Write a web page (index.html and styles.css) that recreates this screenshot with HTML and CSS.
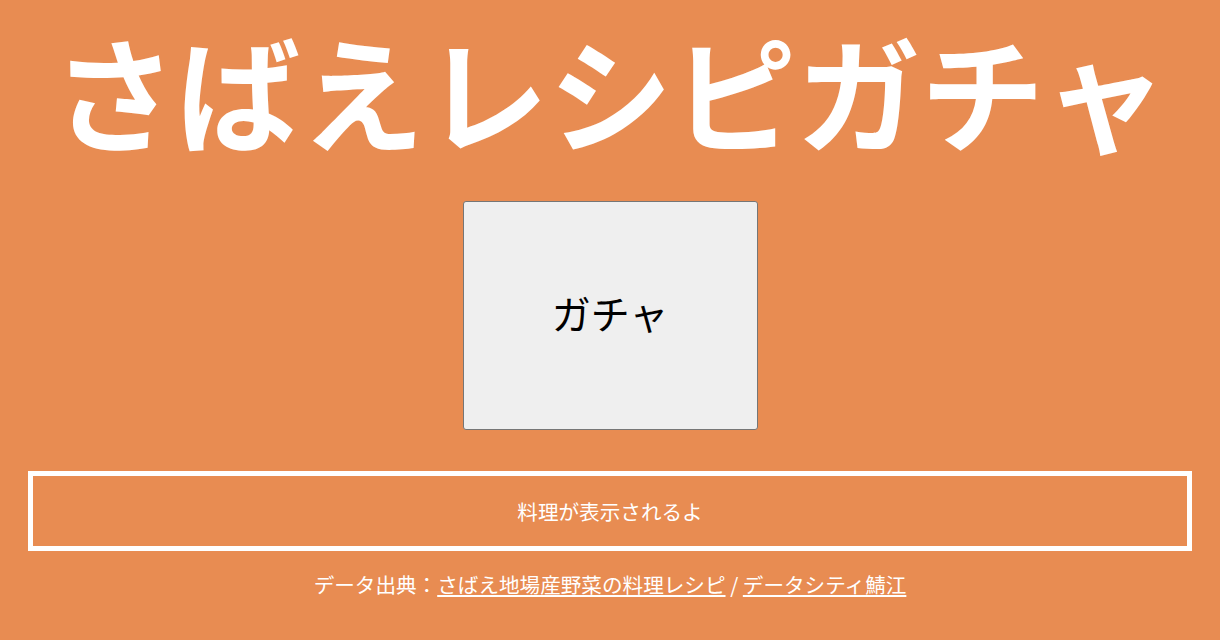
FILE: index.html
```html
<!DOCTYPE html>
<html lang="ja">
<head>
<meta charset="utf-8">
<title>さばえレシピガチャ</title>
<link rel="stylesheet" href="styles.css">
</head>
<body>
<main class="page">
  <h1 class="title">さばえレシピガチャ</h1>
  <div class="btn-wrap"><button class="gacha">ガチャ</button></div>
  <div class="result">料理が表示されるよ</div>
  <p class="credit">データ出典：<a href="#">さばえ地場産野菜の料理レシピ</a> / <a href="#">データシティ鯖江</a></p>
</main>
</body>
</html>
```
FILE: styles.css
```css
html, body {
  margin: 0;
  padding: 0;
  background: #e88c52;
}
body {
  font-family: "Noto Sans CJK JP", "Noto Sans", sans-serif;
  color: #fff;
}
.page {
  display: flex;
  flex-direction: column;
  align-items: center;
  padding: 0 28px;
}
.title {
  margin: 14px 0 0;
  font-size: 124px;
  font-weight: 700;
  line-height: 150px;
  letter-spacing: 0;
  white-space: nowrap;
}
.btn-wrap {
  margin-top: 37px;
}
.gacha {
  width: 295px;
  height: 229px;
  background: #efefef;
  border: 1px solid #767676;
  border-radius: 3px;
  font-family: "Noto Sans CJK JP", sans-serif;
  font-size: 39px;
  color: #000;
  padding: 0 0 8px;
}
.result {
  margin-top: 41px;
  align-self: stretch;
  height: 70px;
  border: 5px solid #fff;
  display: flex;
  align-items: center;
  justify-content: center;
  font-size: 20.6px;
}
.credit {
  margin: 18px 0 0;
  font-size: 20.6px;
}
.credit a {
  color: #fff;
}
```
